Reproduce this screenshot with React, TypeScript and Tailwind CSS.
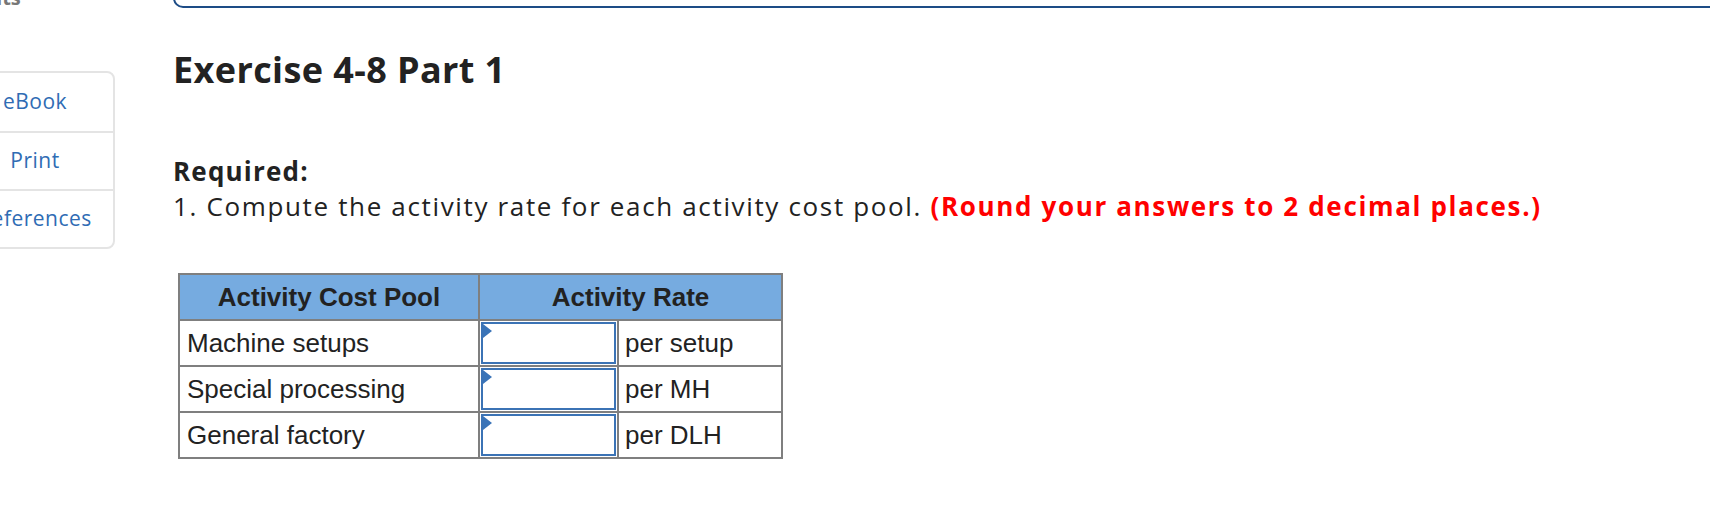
import React from "react";

const rows = [
  { pool: "Machine setups", unit: "per setup" },
  { pool: "Special processing", unit: "per MH" },
  { pool: "General factory", unit: "per DLH" },
];

const links = ["eBook", "Print", "References"];

export default function App() {
  return (
    <div className="w-[1710px] h-[532px] overflow-hidden bg-white relative font-['Open_Sans',sans-serif] text-[#222]">
      <div className="flex">
        {/* Left rail */}
        <div className="w-[173px] shrink-0 flex flex-col">
          <div className="-mt-[15px] h-[26px] text-[20px] leading-[26px] font-bold text-[#777] -ml-[42px]">
            Points
          </div>
          <div className="mt-[60px] -ml-[45px] w-[160px] border-2 border-[#e4e4e4] rounded-[8px] flex flex-col">
            {links.map((l, i) => (
              <div
                key={l}
                className={`flex items-center justify-center text-[21px] tracking-[0.5px] text-[#2f6cb4] ${
                  i === 0 ? "h-[58px]" : "h-[58px] border-t-2 border-[#e4e4e4]"
                }`}
              >
                {l}
              </div>
            ))}
          </div>
        </div>

        {/* Main content */}
        <div className="flex-1 flex flex-col">
          <div className="-mt-[40px] h-[48px] -mr-[20px] border-2 border-[#1d4c86] rounded-[10px]" />

          <h1 className="mt-[40px] text-[36px] leading-[44px] font-bold tracking-[0.4px] text-[#222]">
            Exercise 4-8 Part 1
          </h1>

          <div className="mt-[62px] text-[26px] leading-[35px]">
            <div className="font-bold tracking-[1.2px]">Required:</div>
            <div className="tracking-[1.65px]">
              1. Compute the activity rate for each activity cost pool.{" "}
              <span className="font-bold tracking-[1.65px] text-[#ff0000]">
                (Round your answers to 2 decimal places.)
              </span>
            </div>
          </div>

          <table className="self-start w-[605px] mt-[49px] ml-[5px] border-collapse border-2 border-[#7f7f7f] font-['Liberation_Sans',Arial,sans-serif] text-[26px] text-[#222]">
            <thead>
              <tr className="bg-[#76abe0] h-[46px]">
                <th className="w-[300px] border-2 border-[#7f7f7f] font-bold text-center">Activity Cost Pool</th>
                <th colSpan={2} className="border-2 border-[#7f7f7f] font-bold text-center">
                  Activity Rate
                </th>
              </tr>
            </thead>
            <tbody>
              {rows.map((r) => (
                <tr key={r.pool} className="h-[46px]">
                  <td className="border-2 border-[#7f7f7f] pl-[7px] font-normal">{r.pool}</td>
                  <td className="border-2 border-[#7f7f7f] p-0 w-[139px]">
                    <div className="relative mx-[1px] mb-[1px] h-[42px] border-2 border-[#3b73b5] bg-white">
                      <svg className="absolute left-0 top-0" width="9" height="14" viewBox="0 0 9 14">
                        <path d="M0 0 L9 7 L0 14 Z" fill="#3a74b8" />
                      </svg>
                    </div>
                  </td>
                  <td className="border-2 border-[#7f7f7f] pl-[6px]">{r.unit}</td>
                </tr>
              ))}
            </tbody>
          </table>
        </div>
      </div>
    </div>
  );
}
